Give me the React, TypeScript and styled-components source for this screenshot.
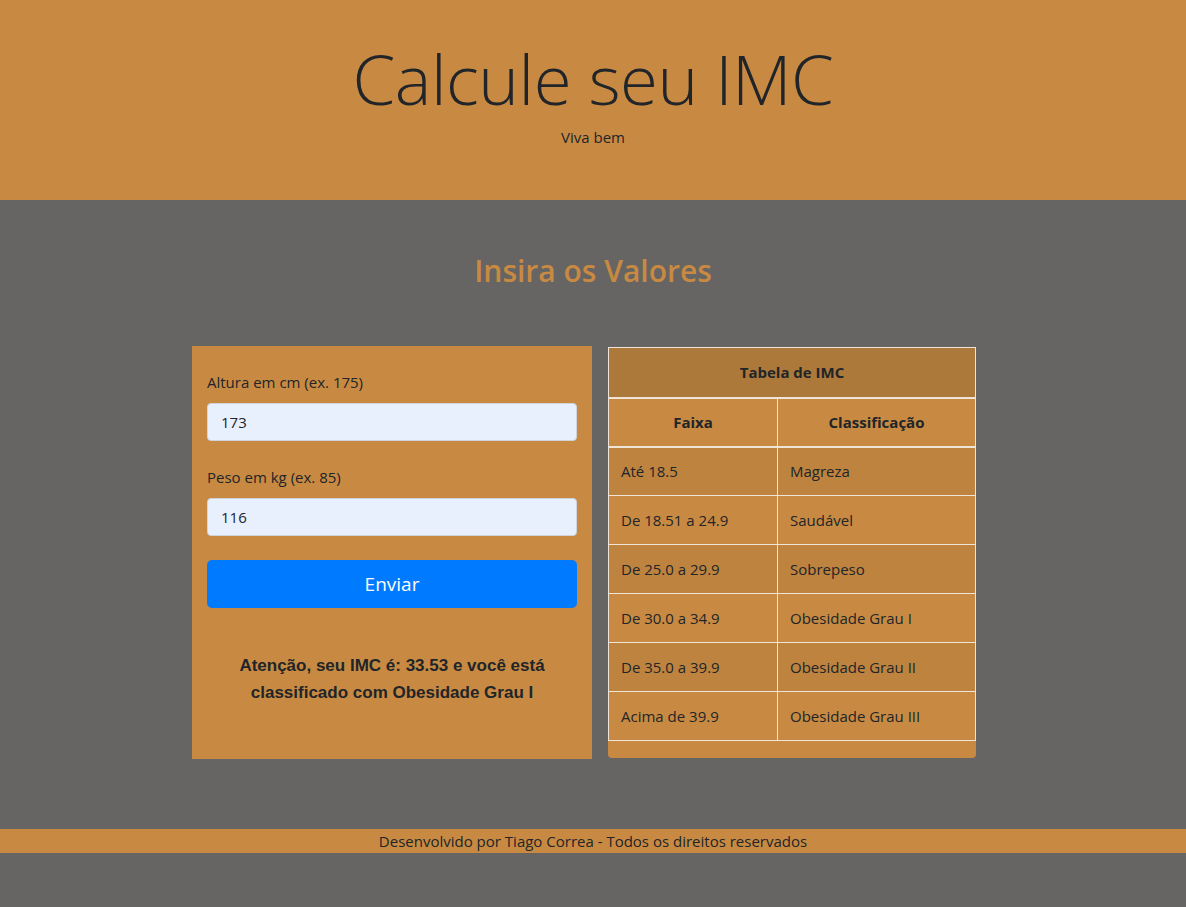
import React from 'react';
import styled, { createGlobalStyle } from 'styled-components';

const ORANGE = '#c88a42';
const GRAY = '#666564';
const TEXT = '#212529';

const GlobalStyle = createGlobalStyle`
  * { box-sizing: border-box; }
  body {
    margin: 0;
    background: ${GRAY};
    font-family: 'Open Sans', 'Noto Sans', sans-serif;
    font-size: 15px;
    color: ${TEXT};
  }
`;

const Header = styled.header`
  background: ${ORANGE};
  height: 200px;
  display: flex;
  flex-direction: column;
  align-items: center;
  padding-top: 37px;
`;

const Title = styled.h1`
  margin: 0;
  font-size: 69px;
  font-weight: 300;
  line-height: 1.2;
  letter-spacing: -0.5px;
  color: ${TEXT};
`;

const Subtitle = styled.p`
  margin: 7px 0 0;
  font-size: 15px;
`;

const Main = styled.main`
  padding: 53px 0 70px;
`;

const SectionTitle = styled.h2`
  margin: 0 0 57px;
  text-align: center;
  color: ${ORANGE};
  font-size: 30px;
  font-weight: 600;
  line-height: 1.2;
`;

const Row = styled.div`
  width: 802px;
  margin: 0 auto;
  padding-right: 18px;
  display: flex;
  gap: 16px;
  align-items: flex-start;
`;

const FormCard = styled.form`
  width: 400px;
  height: 413px;
  background: ${ORANGE};
  padding: 26px 15px 15px;
  display: flex;
  flex-direction: column;
`;

const Label = styled.label`
  font-size: 15px;
  margin-bottom: 11px;
`;

const Input = styled.input`
  height: 38px;
  width: 100%;
  background: #e8f0fe;
  border: 1px solid #ced4da;
  border-radius: 4px;
  padding: 0 13px;
  font-family: inherit;
  font-size: 15px;
  color: ${TEXT};
  margin-bottom: 26px;
  outline: none;
`;

const SubmitButton = styled.button`
  height: 48px;
  width: 100%;
  margin-top: -2px;
  background: #007bff;
  border: none;
  border-radius: 5px;
  color: #fff;
  font-family: inherit;
  font-size: 19px;
  cursor: pointer;
`;

const Result = styled.p`
  margin: 44px 10px 0;
  text-align: center;
  font-family: 'Liberation Sans', Arial, sans-serif;
  font-weight: 700;
  font-size: 17px;
  line-height: 27px;
  color: ${TEXT};
`;

const TableCard = styled.div`
  width: 368px;
  background: ${ORANGE};
  border-radius: 0 0 4px 4px;
  padding-bottom: 17px;
  margin-top: 1px;
`;

const Table = styled.table`
  width: 100%;
  border-collapse: collapse;
  font-size: 15px;
`;

const Caption = styled.th`
  background: #ad793a;
  height: 50px;
  font-weight: 700;
  border: 1px solid #eee4d8;
  border-bottom-width: 2px;
`;

const HeadCell = styled.th<{ $w?: string }>`
  height: 49px;
  font-weight: 700;
  border: 1px solid #eee4d8;
  border-bottom-width: 2px;
  width: ${(p) => p.$w || 'auto'};
`;

const BodyRow = styled.tr<{ $odd: boolean }>`
  background: ${(p) => (p.$odd ? '#be833f' : ORANGE)};
`;

const Cell = styled.td`
  height: 49px;
  padding: 0 12px;
  border: 1px solid #eee4d8;
`;

const Footer = styled.footer`
  background: ${ORANGE};
  height: 24px;
  text-align: center;
  font-size: 15px;
  line-height: 24px;
`;

const rows = [
  ['Até 18.5', 'Magreza'],
  ['De 18.51 a 24.9', 'Saudável'],
  ['De 25.0 a 29.9', 'Sobrepeso'],
  ['De 30.0 a 34.9', 'Obesidade Grau I'],
  ['De 35.0 a 39.9', 'Obesidade Grau II'],
  ['Acima de 39.9', 'Obesidade Grau III'],
];

export default function App() {
  return (
    <>
      <GlobalStyle />
      <Header>
        <Title>Calcule seu IMC</Title>
        <Subtitle>Viva bem</Subtitle>
      </Header>
      <Main>
        <SectionTitle>Insira os Valores</SectionTitle>
        <Row>
          <FormCard onSubmit={(e) => e.preventDefault()}>
            <Label>Altura em cm (ex. 175)</Label>
            <Input defaultValue="173" />
            <Label>Peso em kg (ex. 85)</Label>
            <Input defaultValue="116" />
            <SubmitButton type="submit">Enviar</SubmitButton>
            <Result>
              Atenção, seu IMC é: 33.53 e você está classificado com Obesidade Grau I
            </Result>
          </FormCard>
          <TableCard>
            <Table>
              <thead>
                <tr>
                  <Caption colSpan={2}>Tabela de IMC</Caption>
                </tr>
                <tr>
                  <HeadCell $w="169px">Faixa</HeadCell>
                  <HeadCell>Classificação</HeadCell>
                </tr>
              </thead>
              <tbody>
                {rows.map(([faixa, classe], i) => (
                  <BodyRow key={faixa} $odd={i % 2 === 0}>
                    <Cell>{faixa}</Cell>
                    <Cell>{classe}</Cell>
                  </BodyRow>
                ))}
              </tbody>
            </Table>
          </TableCard>
        </Row>
      </Main>
      <Footer>Desenvolvido por Tiago Correa - Todos os direitos reservados</Footer>
    </>
  );
}
